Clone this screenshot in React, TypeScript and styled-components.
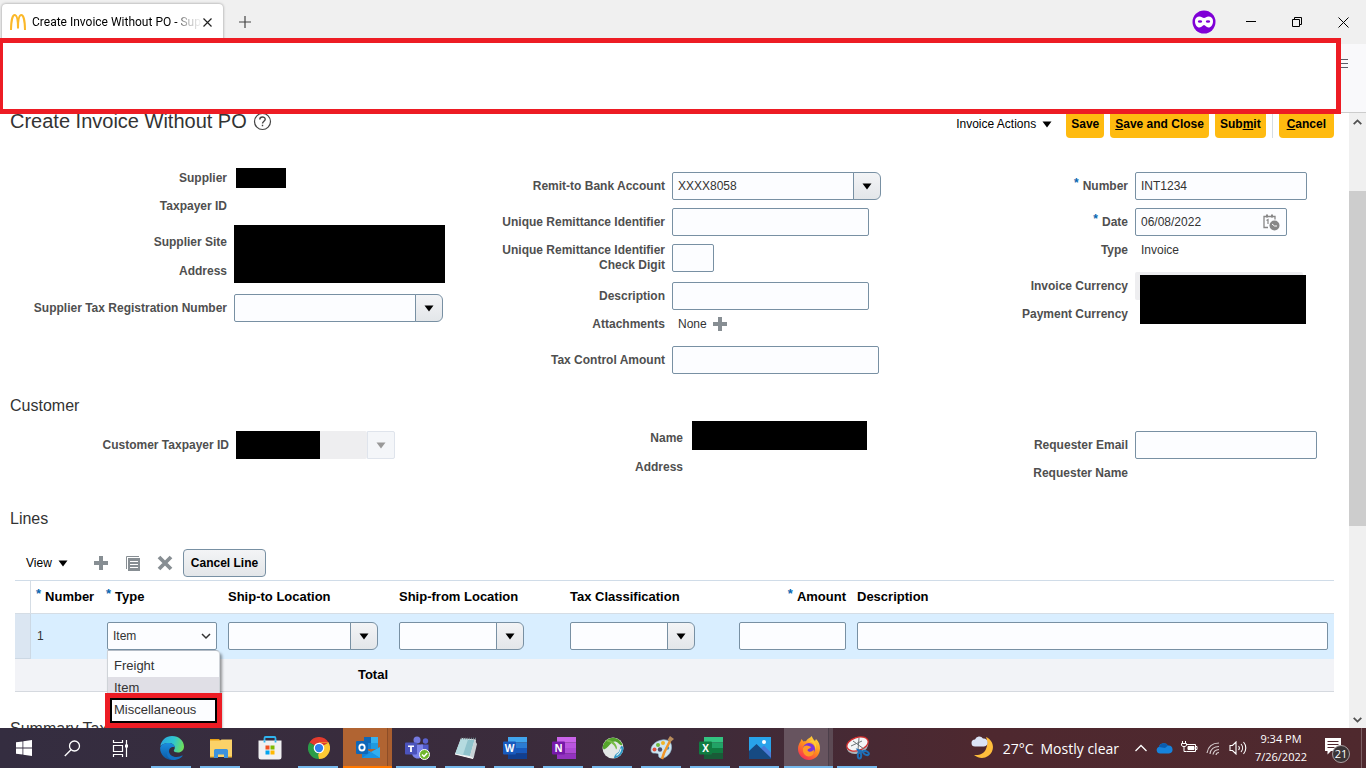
import React from 'react';
import styled, { createGlobalStyle, css } from 'styled-components';

const GlobalStyle = createGlobalStyle`
  *, *::before, *::after { box-sizing: border-box; }
  html, body, #root { height: 100%; }
  body {
    margin: 0;
    overflow: hidden;
    background: #fff;
    color: #333;
    font: 12px/15px "Liberation Sans", Arial, sans-serif;
  }
  button, input, select { font: inherit; color: inherit; margin: 0; }
  h1, h2, ul { margin: 0; padding: 0; font-weight: 400; }
  svg { display: block; flex: none; }
`;

const ui = '"Open Sans", "Segoe UI", sans-serif';
const red = '#ed1c24';
const edge = '#7890a3';

const Screen = styled.div`
  display: flex;
  flex-direction: column;
  height: 100vh;
  position: relative;
  overflow: hidden;
`;

/* ---------- browser chrome ---------- */

const TabStrip = styled.header`
  display: flex;
  align-items: stretch;
  flex: none;
  height: 44px;
  background: #f0f0f0;
`;

const BrowserTab = styled.div`
  display: flex;
  align-items: center;
  width: 221px;
  margin: 4px 0 0 2px;
  padding: 0 10px 4px 8px;
  border-radius: 4px 4px 0 0;
  background: #fff;
  box-shadow: 0 0 3px rgba(0, 0, 0, 0.4);
`;

const TabTitle = styled.span`
  flex: 1;
  margin-left: 6px;
  overflow: hidden;
  white-space: nowrap;
  font: 12px/16px Roboto, "Segoe UI", sans-serif;
  color: #000;
  mask-image: linear-gradient(to right, #000 145px, rgba(0, 0, 0, 0.4) 152px, transparent 171px);
`;

const ChromeButton = styled.button<{ $w: number }>`
  display: flex;
  align-items: center;
  justify-content: center;
  width: ${(p) => p.$w}px;
  padding: 0;
  border: 0;
  background: transparent;
`;

const WindowControls = styled.div`
  display: flex;
  margin-left: auto;
`;

const BrowserToolbar = styled.div`
  display: flex;
  align-items: flex-start;
  justify-content: flex-end;
  flex: none;
  height: 69px;
  padding: 13px 18px 0 0;
  background: #f9f9fb;
  border-bottom: 1px solid #ccc;
`;

const AddressHighlight = styled.div`
  position: absolute;
  top: 38px;
  left: 0;
  right: 25px;
  height: 76px;
  border: 5px solid ${red};
  border-left-width: 3px;
  background: #fff;
  z-index: 5;
`;

/* ---------- page ---------- */

const Viewport = styled.div`
  display: flex;
  flex: 1;
  min-height: 0;
  overflow: hidden;
`;

const Page = styled.main`
  flex: 1;
  min-width: 0;
`;

const PageHeader = styled.div`
  display: flex;
  align-items: flex-start;
  height: 28px;
  margin-top: -3px;
  padding: 0 15px 0 10px;
`;

const PageTitle = styled.h1`
  font-size: 20px;
  line-height: 22px;
`;

const HelpButton = styled.button`
  margin: 2px 0 0 6px;
  padding: 0;
  border: 0;
  background: none;
`;

const Actions = styled.div`
  display: flex;
  align-items: stretch;
  gap: 6px;
  height: 28px;
  margin-left: auto;
`;

const MenuButton = styled.button`
  display: flex;
  align-items: center;
  gap: 6px;
  padding: 0;
  border: 0;
  background: none;
  color: #000;
  white-space: nowrap;
`;

const ActionsMenu = styled(MenuButton)`
  margin-right: 8px;
`;

const YellowButton = styled.button`
  padding: 0 5px;
  border: 0;
  border-radius: 4px;
  background: #ffbb10;
  color: #000;
  font-weight: 700;
  white-space: nowrap;
`;

const CancelButton = styled(YellowButton)`
  padding: 0 8px;
`;

const Separator = styled.span`
  width: 1px;
  background: #d6dde3;
`;

const FormGrid = styled.div`
  display: grid;
  grid-template-columns: 445fr 455fr 449fr;
`;

const InvoiceForm = styled(FormGrid)`
  margin-top: 26px;
`;

const Column = styled.div<{ $label: number; $top?: number }>`
  --label: ${(p) => p.$label}px;
  display: flex;
  flex-direction: column;
  padding-top: ${(p) => p.$top ?? 0}px;
`;

const Row = styled.div<{ $gap?: number }>`
  position: relative;
  display: flex;
  align-items: center;
  height: 28px;
  margin-top: ${(p) => p.$gap ?? 0}px;
`;

const GroupRow = styled.div<{ $gap?: number }>`
  display: flex;
  align-items: flex-start;
  margin-top: ${(p) => p.$gap ?? 0}px;
`;

const labelText = css`
  flex: none;
  width: var(--label);
  text-align: right;
  font-weight: 700;
  color: #4f4f4f;
`;

const Label = styled.label`
  ${labelText}
`;

const LabelOnly = styled.span`
  ${labelText}
`;

const LabelStack = styled.div`
  ${labelText}
  display: flex;
  flex-direction: column;
  padding-top: 3px;
  line-height: 29px;
`;

const Star = styled.span`
  position: relative;
  top: -3px;
  margin-right: 4px;
  color: #0a66b0;
`;

const fieldBox = css`
  height: 28px;
  border: 1px solid ${edge};
  border-radius: 2px;
  background: #fcfdff;
  color: #333;
  outline: 0;
`;

const TextInput = styled.input<{ $w: number }>`
  ${fieldBox}
  width: ${(p) => p.$w}px;
  margin-left: 7px;
  padding: 0 5px;
`;

const DisabledInput = styled.input<{ $w: number }>`
  width: ${(p) => p.$w}px;
  height: 28px;
  margin-left: 7px;
  padding: 0 5px;
  border: 0;
  border-radius: 2px;
  background: #eeeef0;
`;

const DateBox = styled.div`
  ${fieldBox}
  display: flex;
  align-items: center;
  width: 152px;
  margin-left: 7px;
  padding-right: 6px;
`;

const DateInput = styled.input`
  flex: 1;
  min-width: 0;
  padding: 0 5px;
  border: 0;
  outline: 0;
  background: none;
`;

const IconButton = styled.button`
  padding: 0;
  border: 0;
  background: none;
`;

const AttachButton = styled(IconButton)`
  margin-left: 5px;
`;

const ComboBox = styled.div<{ $w: number; $inset?: number }>`
  display: flex;
  width: ${(p) => p.$w}px;
  height: 28px;
  margin-left: ${(p) => p.$inset ?? 7}px;
`;

const ComboInput = styled.input`
  ${fieldBox}
  flex: 1;
  min-width: 0;
  padding: 0 5px;
  border-radius: 2px 0 0 2px;
`;

const ComboButton = styled.button`
  display: flex;
  align-items: center;
  justify-content: center;
  width: 28px;
  height: 28px;
  margin-left: -1px;
  padding: 0;
  border: 1px solid ${edge};
  border-radius: 0 6px 6px 0;
  background: linear-gradient(#f3f4f6, #e3e6e9);
  color: #000;

  &:disabled {
    margin-left: 0;
    border-color: #dfe4ec;
    border-radius: 0 2px 2px 0;
    background: #f4f6f9;
    color: #999;
  }
`;

const PlainValue = styled.span`
  margin-left: 13px;
`;

const Redaction = styled.div<{ $w: number; $h: number; $inset?: number }>`
  width: ${(p) => p.$w}px;
  height: ${(p) => p.$h}px;
  margin-left: ${(p) => p.$inset ?? 7}px;
  background: #000;
`;

const RedactionOver = styled.div<{ $x: number; $y: number; $w: number; $h: number }>`
  position: absolute;
  left: calc(var(--label) + ${(p) => p.$x}px);
  top: ${(p) => p.$y}px;
  width: ${(p) => p.$w}px;
  height: ${(p) => p.$h}px;
  background: #000;
  z-index: 1;
`;

const SectionTitle = styled.h2<{ $gap?: number }>`
  margin: ${(p) => p.$gap ?? 22}px 0 0 10px;
  font-size: 16px;
  line-height: 20px;
`;

const CustomerForm = styled(FormGrid)`
  margin-top: 5px;
`;

const LinesToolbar = styled.div`
  display: flex;
  align-items: center;
  height: 28px;
  margin: 20px 0 0 26px;
`;

const ToolIcons = styled.div`
  display: flex;
  gap: 16px;
  margin: 0 10px 0 25px;
`;

const GreyButton = styled.button`
  height: 28px;
  padding: 0 7px;
  border: 1px solid ${edge};
  border-radius: 4px;
  background: linear-gradient(#f3f4f6, #e3e6e9);
  color: #000;
  font-weight: 700;
`;

/* ---------- lines table ---------- */

const TableWrap = styled.div`
  margin: 3px 15px 0;
`;

const LinesTable = styled.table`
  width: 100%;
  table-layout: fixed;
  border-collapse: separate;
  border-spacing: 0;
  border-top: 1px solid #d0dce8;
  border-bottom: 1px solid #d5d9df;
`;

const Col = styled.col<{ $w?: number }>`
  width: ${(p) => (p.$w ? `${p.$w}px` : 'auto')};
`;

const HeadCell = styled.th<{ $right?: boolean; $starred?: boolean }>`
  height: 33px;
  padding: 0 5px 2px ${(p) => (p.$starred ? 5 : 6)}px;
  border-bottom: 1px solid #d5dde5;
  text-align: ${(p) => (p.$right ? 'right' : 'left')};
  font-size: 13px;
  font-weight: 700;
  color: #000;
  white-space: nowrap;
`;

const HeadSelector = styled(HeadCell)`
  border-right: 1px solid #d5dde5;
`;

const BodyCell = styled.td<{ $right?: boolean }>`
  height: 45px;
  padding: 0 ${(p) => (p.$right ? 5 : 6)}px 1px 6px;
  background: #d9eeff;
  text-align: ${(p) => (p.$right ? 'right' : 'left')};
`;

const BodySelector = styled(BodyCell)`
  background: #dbe6f2;
  border-right: 1px solid #ccd8e4;
  border-bottom: 1px solid #ccd8e4;
`;

const TypeCell = styled.div`
  position: relative;
`;

const FootCell = styled.td`
  height: 32px;
  padding: 0 5px 1px 0;
  background: #f2f3f7;
  text-align: right;
  font-size: 13px;
  font-weight: 700;
  color: #000;
`;

const CellInput = styled(TextInput)`
  margin-left: 0;
`;

const WideInput = styled(CellInput)`
  width: 100%;
`;

const TypeSelect = styled.select`
  ${fieldBox}
  display: block;
  width: 110px;
  padding: 0 5px;
  appearance: none;
`;

const SelectChevron = styled.span`
  position: absolute;
  top: 10px;
  left: 94px;
  pointer-events: none;
`;

const Options = styled.ul`
  position: absolute;
  top: 28px;
  left: 0;
  width: 113px;
  height: 82px;
  padding-top: 4px;
  list-style: none;
  background: #fcfdff;
  border: 1px solid #cfd3d8;
  border-top-color: #b4bcc6;
  border-radius: 0 4px 0 0;
  box-shadow: 2px 3px 3px rgba(0, 0, 0, 0.4);
  z-index: 3;
`;

const Option = styled.li<{ $on?: boolean }>`
  height: 22px;
  padding: 0 6px;
  font-size: 13px;
  line-height: 21px;
  background: ${(p) => (p.$on ? '#e0dfe6' : 'transparent')};
`;

const OptionHighlight = styled.div`
  position: absolute;
  top: 71px;
  left: -2px;
  width: 117px;
  height: 35px;
  border: 5px solid ${red};
  z-index: 4;

  &::after {
    content: '';
    display: block;
    height: 100%;
    border: 2px solid #000;
  }
`;

/* ---------- scrollbar ---------- */

const Scrollbar = styled.div`
  display: grid;
  grid-template-rows: 17px 61fr 335fr 185fr 17px;
  flex: none;
  width: 17px;
  background: #f0f0f0;
`;

const ScrollArrow = styled.span`
  display: flex;
  align-items: center;
  justify-content: center;
`;

const ScrollThumb = styled.span`
  grid-row: 3;
  background: #cdcdcd;
`;

const ScrollEnd = styled(ScrollArrow)`
  grid-row: 5;
`;

/* ---------- taskbar ---------- */

const Taskbar = styled.footer`
  display: flex;
  flex: none;
  position: relative;
  z-index: 6;
  height: 40px;
  background: linear-gradient(90deg, #342d40, #3d2b3a 50%, #4e282f 72%, #4f292e);
  color: #fff;
  font-family: ${ui};
`;

const SystemButtons = styled.div`
  display: flex;
  margin-right: 3px;
`;

const TaskButton = styled.button<{ $w?: number; $bg?: string; $line?: string; $full?: boolean }>`
  position: relative;
  display: flex;
  align-items: center;
  justify-content: center;
  width: ${(p) => p.$w ?? 49}px;
  padding: 0;
  border: 0;
  background: ${(p) => p.$bg ?? 'transparent'};

  &::after {
    content: '';
    position: absolute;
    bottom: 0;
    left: ${(p) => (p.$full ? 0 : 4)}px;
    right: ${(p) => (p.$full ? 0 : 5)}px;
    height: 2px;
    background: ${(p) => p.$line ?? 'transparent'};
  }
`;

const Tray = styled.div`
  display: flex;
  align-items: center;
  margin-left: auto;
`;

const Weather = styled.div`
  display: flex;
  align-items: center;
  margin-right: 15px;
  font-size: 14px;
  white-space: nowrap;
`;

const Temperature = styled.span`
  margin: 0 7px 0 8px;
`;

const TrayIcons = styled.div`
  display: flex;
  align-items: center;
  gap: 8px;
`;

const Clock = styled.div`
  width: 68px;
  text-align: center;
  font-size: 11px;
  line-height: 18px;
`;

const Notifications = styled.button`
  position: relative;
  width: 28px;
  height: 32px;
  margin-left: 10px;
  padding: 0 0 3px;
  border: 0;
  background: none;
`;

const Badge = styled.span`
  position: absolute;
  left: 7px;
  top: 13px;
  width: 18px;
  height: 18px;
  border: 1px solid #a9a0a2;
  border-radius: 9px;
  background: #3a3436;
  color: #fff;
  font-size: 11px;
  line-height: 16px;
  text-align: center;
`;

const DesktopEdge = styled.span`
  width: 1px;
  height: 40px;
  margin: 0 4px 0 8px;
  background: #7b5f63;
`;

/* ---------- small drawings ---------- */

const Caret = () => (
  <svg width="10" height="7" viewBox="0 0 10 7"><path d="M0.5 0.5h9L5 6.5z" fill="currentColor" /></svg>
);

const Plus = () => (
  <svg width="16" height="16" viewBox="0 0 16 16"><path d="M6 1h4v5h5v4h-5v5H6v-5H1V6h5z" fill="#878e93" /></svg>
);

const Mask = () => (
  <svg width="24" height="24" viewBox="0 0 24 24">
    <circle cx="12" cy="12" r="11.5" fill="#7f00d6" />
    <path d="M3 11c0-3 2-4.500 4.500-4.500C9.500 6.500 10.500 8 12 8s2.500-1.500 4.500-1.500C19 6.500 21 8 21 11c0 4-2 6.500-4.500 6.500-2.500 0-3-2.500-4.500-2.500s-2 2.500-4.500 2.500C5 17.500 3 15 3 11z" fill="#fff" />
    <ellipse cx="8" cy="11.500" rx="2.200" ry="1.300" fill="#7f00d6" />
    <ellipse cx="16" cy="11.500" rx="2.200" ry="1.300" fill="#7f00d6" />
  </svg>
);

const Arches = () => (
  <svg width="16" height="16" viewBox="0 0 16 16" fill="none" stroke="#fbb829" strokeWidth="2">
    <path d="M1 16C1 8 2.500 1 4.700 1S8 7 8 14.500C8 7 9.100 1 11.300 1S15 8 15 16" />
  </svg>
);

const EdgeIcon = () => (
  <svg width="24" height="24" viewBox="0 0 24 24">
    <defs>
      <linearGradient id="eg" x1="0" y1="0.300" x2="1" y2="0.500">
        <stop offset="0" stopColor="#2aa7e0" /><stop offset="0.550" stopColor="#30c6cf" /><stop offset="1" stopColor="#6ee05a" />
      </linearGradient>
      <linearGradient id="eb" x1="0" y1="0" x2="0" y2="1">
        <stop offset="0" stopColor="#1a8ee0" /><stop offset="1" stopColor="#0c59a4" />
      </linearGradient>
    </defs>
    <path d="M0.300 10C1.500 4 6 0 12 0c7 0 12 5 12 10.500 0 3.500-2.500 6-6 6-3 0-4.200-1-4.200-2 0-.7 1-1.200 1-3 0-2.500-2.700-4.500-6-4.500-4 0-7 1.500-8.500 3z" fill="url(#eg)" />
    <path d="M0.200 11.500C1 8.500 4.500 7 8.500 7c3.500 0 6.300 2 6.300 4.500-1.300-1-5.800-.5-5.800 4 0 4.500 4 8 8.500 7C15.500 23.500 13.800 24 12 24 5 24-.5 18 .2 11.500z" fill="url(#eb)" />
    <path d="M9 14.500c-.5 4 3.500 6.500 7.500 6.500 2.500 0 4.500-.8 5.500-1.500.6-.3.900 0 .5.600-1.500 2.200-4.700 3.900-8 3.900-5 0-8-3.500-7.500-7 .2-1.200 1-2 2-2.500z" fill="#1272c4" />
  </svg>
);

const FolderIcon = () => (
  <svg width="22" height="20" viewBox="0 0 22 20">
    <path d="M0 1h9l2 2.500H0z" fill="#e8a317" />
    <path d="M0 2.500h10l1.500-1H22V19H0z" fill="#fbd268" />
    <path d="M4 20v-7.500A1.500 1.500 0 0 1 5.500 11h11a1.500 1.500 0 0 1 1.500 1.500V20h-4v-3.500H8V20z" fill="#3d92dc" />
    <path d="M0 18h4v1.500H0zM18 18h4v1.500h-4z" fill="#f0b93c" />
  </svg>
);

const StoreIcon = () => (
  <svg width="24" height="24" viewBox="0 0 24 24">
    <path d="M6.500 5V2.200A1.200 1.200 0 0 1 7.700 1h8.600a1.200 1.200 0 0 1 1.200 1.200V5" fill="none" stroke="#30b4ef" strokeWidth="1.800" />
    <path d="M.5 4.500h23V21a2.500 2.500 0 0 1-2.500 2.500H3A2.500 2.500 0 0 1 .5 21z" fill="#f0f0f2" />
    <path d="M7.500 9.500h4v4h-4z" fill="#f25022" /><path d="M12.500 9.500h4v4h-4z" fill="#7fba00" />
    <path d="M7.500 14.500h4v4h-4z" fill="#00a4ef" /><path d="M12.500 14.500h4v4h-4z" fill="#ffb900" />
    <path d="M6.500 6.500V4.500M17.500 6.500V4.500" stroke="#30b4ef" strokeWidth="1.800" />
  </svg>
);

const ChromeIcon = () => (
  <svg width="22" height="22" viewBox="0 0 24 24">
    <path d="M12 12 1.600 6A12 12 0 0 1 22.400 6z" fill="#e33b2e" />
    <path d="M12 12V24A12 12 0 0 1 1.600 6z" fill="#2a9c48" />
    <path d="M12 12 22.400 6A12 12 0 0 1 12 24z" fill="#fcc934" />
    <path d="M12 6.500h10.600L22.400 6H12z" fill="#fcc934" />
    <path d="M16.800 14.700 12 24l-1-5z" fill="#fcc934" />
    <circle cx="12" cy="12" r="5.800" fill="#fff" /><circle cx="12" cy="12" r="4.500" fill="#2d7ff0" />
  </svg>
);

const Tile = styled.text`
  font: 700 10px ${ui};
  fill: #fff;
  text-anchor: middle;
`;

const OutlookIcon = () => (
  <svg width="24" height="24" viewBox="0 0 24 24">
    <path d="M8 1h14v12H8z" fill="#1a80cf" /><path d="M15 1h7v6h-7z" fill="#36b2ee" /><path d="M8 1h7v6H8z" fill="#1067b5" />
    <path d="M15 7h7v6h-7z" fill="#1f9be0" />
    <path d="M6 11l9 5 9-5v11H6z" fill="#1482d6" /><path d="M24 11v11L11 14.500l4 1.500z" fill="#33aef0" /><path d="M6 22l9-6 9 6z" fill="#1a94e3" />
    <rect x="0" y="5" width="12" height="13" rx="1" fill="#0f67b8" />
    <ellipse cx="6" cy="11.500" rx="2.700" ry="3" fill="none" stroke="#fff" strokeWidth="1.800" />
  </svg>
);

const TeamsIcon = () => (
  <svg width="26" height="24" viewBox="0 0 26 24">
    <circle cx="13" cy="4" r="3.500" fill="#7479e0" /><circle cx="21.500" cy="5" r="2.700" fill="#5a62cf" />
    <path d="M17 8.500h7.500V15c0 3-2 4.500-4 4.500S17 18 17 15z" fill="#5059c9" />
    <path d="M8 8.500h11V17c0 4-2.500 5.500-5.500 5.500S8 20 8 17z" fill="#7b83eb" />
    <rect x="1" y="6.500" width="12" height="12" rx="1" fill="#4b53bc" />
    <path d="M4 9.500h6v1.600H7.900V16H6.100v-4.900H4z" fill="#fff" />
    <circle cx="20.500" cy="18.500" r="5" fill="#6fb52c" stroke="#fff" />
    <path d="M18 18.500l2 2 3.200-3.600" fill="none" stroke="#fff" strokeWidth="1.500" />
  </svg>
);

const NotepadIcon = () => (
  <svg width="24" height="24" viewBox="0 0 24 24">
    <path d="M7 2l15 1.500-3 19L1 18z" fill="#e8eef0" />
    <path d="M7 3l13.500 1L16 20 1.500 17.500z" fill="#8fc3cc" />
    <path d="M7 3l7 .5L9 18.700l-7.500-1.200z" fill="#b5dbe0" />
    <path d="M16 20l4.500-16L23 8l-3.500 14.500z" fill="#c9d2d6" />
    <path d="M7 2.500h15" stroke="#6b8288" strokeWidth="1.500" strokeDasharray="1 1" />
    <path d="M1 18l18 4.500" stroke="#fff" />
  </svg>
);

const OfficeIcon = ({ letter, dark, shades }: { letter: string; dark: string; shades: string[] }) => (
  <svg width="24" height="22" viewBox="0 0 24 22">
    {shades.map((c, i) => <rect key={i} x="5" y={i * 5.5} width="19" height="5.500" fill={c} />)}
    <rect x="0" y="4.500" width="13" height="13" rx="1" fill={dark} />
    <Tile x="6.500" y="14.500">{letter}</Tile>
  </svg>
);

const WebexIcon = () => (
  <svg width="22" height="22" viewBox="0 0 22 22">
    <circle cx="11" cy="11" r="10.500" fill="#e3e7e6" />
    <path d="M1 8.500C3 3 8 0 13 1c4 .8 6.500 4 7.500 7-1.500 1-3-.5-4.500-2-2-2-4-2-6-.5C7 8 5.500 11 2 12.500.8 11.500.6 10 1 8.500z" fill="#55a32c" />
    <path d="M5 2.500C9 3 13 5 14.500 9c.8 2 .5 3-.5 3.500-1-4-4-7-9-8z" fill="#77bd46" />
    <path d="M21.500 11c0 5-4.500 10-9.500 10.300 0-2 1-4 3.500-5.300 2.500-1.500 2-4.500 3.500-6.500 1-1 2 0 2.500 1.500z" fill="#2f96c4" />
    <path d="M14.500 18.500c2.500-1.500 4-4 4.500-7" stroke="#dff1f6" strokeWidth="1.300" fill="none" />
  </svg>
);

const PaintIcon = () => (
  <svg width="24" height="24" viewBox="0 0 24 24">
    <path d="M12 4c7-1 10 3 9.500 8-.5 6-6 11-11 10-3-.6-1-4-3-4.500C5 17 1 18 1 14 1 9 6 5 12 4z" fill="#cfe5f1" stroke="#8db4ca" strokeWidth="0.700" />
    <circle cx="4.500" cy="13.500" r="2" fill="#e0513c" /><circle cx="8" cy="9" r="2" fill="#6dbb3c" /><circle cx="13" cy="7" r="2" fill="#f0b428" />
    <circle cx="10" cy="13.500" r="2.200" fill="#4b4a68" /><circle cx="17.500" cy="12" r="1.800" fill="#3f8fd4" />
    <path d="M20 5 14 17l-2 6" stroke="#f0962a" strokeWidth="2.500" fill="none" /><path d="M17.500 4 20 0l4 3-3.500 3z" fill="#b98d5c" />
  </svg>
);

const PhotosIcon = () => (
  <svg width="22" height="22" viewBox="0 0 22 22">
    <path d="M0 0h22v22H0z" fill="#28a3ea" /><circle cx="15" cy="5" r="2" fill="#fff" />
    <path d="M10 13l5-4.500 7 7V22H14z" fill="#4b7bd8" /><path d="M0 14l7.500-7L22 21v1H0z" fill="#164a82" />
  </svg>
);

const FirefoxIcon = () => (
  <svg width="24" height="24" viewBox="0 0 24 24">
    <defs>
      <linearGradient id="fx" x1="0.800" y1="0" x2="0.200" y2="1">
        <stop offset="0" stopColor="#ffe03f" /><stop offset="0.500" stopColor="#ff8a1e" /><stop offset="1" stopColor="#f5245c" />
      </linearGradient>
    </defs>
    <path d="M3.500 5.500 4.500 3l2 2.500C8 5 9 5.500 10 4c1-2 3-1.500 4.500-4 1.500 2 1.500 3.500 3.500 5l1-2c3 3 4 6 4 9.500C23 19 18 24 12 24S1 19 1 13c0-3 1-5.500 2.500-7.500z" fill="url(#fx)" />
    <circle cx="12" cy="13" r="6" fill="#7b35d8" />
    <path d="M6 12c1-3 4-3 6-2l2 1c-1 2-3.500 1.500-3.500 3.500 1.500 2 5 1.500 6-1 2 5-3 8-7 6.500C6.500 18.500 5.500 15 6 12z" fill="#ff9a26" />
    <path d="M12 6c4-1 7 3 6 8 2-4 1-8-3-10z" fill="#ffcf35" />
  </svg>
);

const SnipIcon = () => (
  <svg width="24" height="24" viewBox="0 0 24 24">
    <ellipse cx="11.500" cy="10" rx="11" ry="7.500" fill="#aeb6ba" transform="rotate(-18 11.500 10)" />
    <ellipse cx="11.500" cy="8" rx="11" ry="6.500" fill="#f4f5f6" stroke="#d32f2f" strokeWidth="1.300" transform="rotate(-18 11.500 8)" />
    <path d="M7 5l11 8M13 2l-1 12M5 10l11-5" stroke="#6d7478" />
    <g fill="none" stroke="#1e6fb8" strokeWidth="2"><ellipse cx="13.500" cy="19.500" rx="1.700" ry="3" /><ellipse cx="20" cy="17" rx="3" ry="1.700" transform="rotate(25 20 17)" /><path d="M13.500 16.500 12 14l6 2" /></g>
  </svg>
);

const MoonIcon = () => (
  <svg width="24" height="24" viewBox="0 0 24 24">
    <path d="M15 1c6 2.500 8.500 9 6 14.500C18.500 21 10.500 25 3 19c6 .5 10-1.500 12-6 1.700-4 1.700-8 0-12z" fill="#ffbe3c" />
    <path d="M4 10.500a3.500 3.500 0 0 1 0-7 4.500 4.500 0 0 1 8-1 4 4 0 0 1 1 8z" fill="#dbe4f7" />
  </svg>
);

/* ---------- composed pieces ---------- */

const Combo = ({ id, w, value = '', inset, label }: { id: string; w: number; value?: string; inset?: number; label: string }) => (
  <ComboBox $w={w} $inset={inset}>
    <ComboInput id={id} defaultValue={value} aria-label={label} />
    <ComboButton type="button" aria-label={`Open ${label}`}><Caret /></ComboButton>
  </ComboBox>
);

const Field = ({ id, label, w, gap, value = '', required }: { id: string; label: React.ReactNode; w: number; gap?: number; value?: string; required?: boolean }) => (
  <Row $gap={gap}>
    <Label htmlFor={id}>{required && <Star>*</Star>}{label}</Label>
    <TextInput id={id} $w={w} defaultValue={value} />
  </Row>
);

const blue = '#76b9ed';

export default function App() {
  return (
    <Screen>
      <GlobalStyle />
      <TabStrip>
        <BrowserTab>
          <Arches />
          <TabTitle>Create Invoice Without PO - Supplier</TabTitle>
          <ChromeButton $w={12} aria-label="Close tab">
            <svg width="9" height="9" viewBox="0 0 9 9"><path d="M.5.5l8 8M8.500.5l-8 8" stroke="#222" strokeWidth="1.200" /></svg>
          </ChromeButton>
        </BrowserTab>
        <ChromeButton $w={43} aria-label="New tab">
          <svg width="12" height="12" viewBox="0 0 12 12"><path d="M6 0v12M0 6h12" stroke="#444" strokeWidth="1.200" /></svg>
        </ChromeButton>
        <WindowControls>
          <ChromeButton $w={48} aria-label="Private browsing"><Mask /></ChromeButton>
          <ChromeButton $w={46} aria-label="Minimize">
            <svg width="10" height="10" viewBox="0 0 10 10"><path d="M0 4.500h10" stroke="#000" /></svg>
          </ChromeButton>
          <ChromeButton $w={46} aria-label="Restore">
            <svg width="10" height="10" viewBox="0 0 10 10" fill="none" stroke="#000"><path d="M.5 2.500h7v7h-7zM2.500 2.500v-2h7v7h-2" /></svg>
          </ChromeButton>
          <ChromeButton $w={46} aria-label="Close">
            <svg width="11" height="11" viewBox="0 0 11 11"><path d="M.5.5l10 10M10.500.5l-10 10" stroke="#000" /></svg>
          </ChromeButton>
        </WindowControls>
      </TabStrip>
      <BrowserToolbar>
        <IconButton aria-label="Browser menu">
          <svg width="12" height="13" viewBox="0 0 12 13"><path d="M0 2.500h12M0 6.500h12M0 10.500h12" stroke="#5b5b66" /></svg>
        </IconButton>
      </BrowserToolbar>
      <AddressHighlight />

      <Viewport>
        <Page>
          <PageHeader>
            <PageTitle>Create Invoice Without PO</PageTitle>
            <HelpButton aria-label="Help">
              <svg width="19" height="19" viewBox="0 0 19 19" fill="none" stroke="#444" strokeWidth="1.200">
                <circle cx="9.500" cy="9.500" r="8" /><path d="M6.800 7.500c0-3.400 5.400-3.300 5.400-.2 0 1.900-2.700 2-2.700 4.200M9.500 12.700v1.500" strokeWidth="1.400" />
              </svg>
            </HelpButton>
            <Actions>
              <ActionsMenu type="button">Invoice Actions <Caret /></ActionsMenu>
              <YellowButton type="button">Save</YellowButton>
              <YellowButton type="button"><u>S</u>ave and Close</YellowButton>
              <YellowButton type="button">Sub<u>m</u>it</YellowButton>
              <Separator />
              <CancelButton type="button"><u>C</u>ancel</CancelButton>
            </Actions>
          </PageHeader>

          <InvoiceForm>
            <Column $label={227}>
              <Row><LabelOnly>Supplier</LabelOnly><Redaction $w={50} $h={20} $inset={9} /></Row>
              <Row><LabelOnly>Taxpayer ID</LabelOnly></Row>
              <GroupRow $gap={5}>
                <LabelStack><span>Supplier Site</span><span>Address</span></LabelStack>
                <Redaction $w={211} $h={58} />
              </GroupRow>
              <Row $gap={8}>
                <Label htmlFor="trn">Supplier Tax Registration Number</Label>
                <Combo id="trn" w={209} label="Supplier Tax Registration Number" />
              </Row>
            </Column>

            <Column $label={220} $top={8}>
              <Row>
                <Label htmlFor="bank">Remit-to Bank Account</Label>
                <Combo id="bank" w={209} value="XXXX8058" label="Remit-to Bank Account" />
              </Row>
              <Field id="uri" label="Unique Remittance Identifier" w={197} gap={8} />
              <Field id="uricd" label={<>Unique Remittance Identifier<br />Check Digit</>} w={42} gap={8} />
              <Field id="desc" label="Description" w={197} gap={10} />
              <Row>
                <LabelOnly>Attachments</LabelOnly>
                <PlainValue>None</PlainValue>
                <AttachButton type="button" aria-label="Add attachment"><Plus /></AttachButton>
              </Row>
              <Field id="tax" label="Tax Control Amount" w={207} gap={8} />
            </Column>

            <Column $label={228} $top={8}>
              <Field id="num" label="Number" w={172} value="INT1234" required />
              <Row $gap={8}>
                <Label htmlFor="date"><Star>*</Star>Date</Label>
                <DateBox>
                  <DateInput id="date" defaultValue="06/08/2022" />
                  <IconButton type="button" aria-label="Select date">
                    <svg width="17" height="17" viewBox="0 0 17 17">
                      <path d="M4 .5v3M9 .5v3" stroke="#878787" strokeWidth="2" />
                      <path d="M5 13.500H1V2.500h11v3" fill="none" stroke="#878787" strokeWidth="1.300" />
                      <path d="M3.500 6.500 5 5.500V10" fill="none" stroke="#878787" strokeWidth="1.200" />
                      <circle cx="11.500" cy="11.500" r="5" fill="#878787" /><path d="M9 10l2.500 2H14" fill="none" stroke="#fff" />
                    </svg>
                  </IconButton>
                </DateBox>
              </Row>
              <Row><LabelOnly>Type</LabelOnly><PlainValue>Invoice</PlainValue></Row>
              <Row $gap={8}>
                <Label htmlFor="cur">Invoice Currency</Label>
                <DisabledInput id="cur" $w={168} disabled />
                <RedactionOver $x={12} $y={3} $w={166} $h={49} />
              </Row>
              <Row><LabelOnly>Payment Currency</LabelOnly></Row>
            </Column>
          </InvoiceForm>

          <SectionTitle>Customer</SectionTitle>
          <CustomerForm>
            <Column $label={229} $top={10}>
              <Row>
                <Label htmlFor="ctid">Customer Taxpayer ID</Label>
                <DisabledInput id="ctid" $w={131} disabled />
                <ComboButton type="button" disabled aria-label="Open Customer Taxpayer ID"><Caret /></ComboButton>
                <RedactionOver $x={7} $y={0} $w={84} $h={28} />
              </Row>
            </Column>
            <Column $label={238}>
              <GroupRow>
                <LabelStack><span>Name</span><span>Address</span></LabelStack>
                <Redaction $w={175} $h={29} $inset={9} />
              </GroupRow>
            </Column>
            <Column $label={228} $top={10}>
              <Field id="email" label="Requester Email" w={182} />
              <Row><LabelOnly>Requester Name</LabelOnly></Row>
            </Column>
          </CustomerForm>

          <SectionTitle>Lines</SectionTitle>
          <LinesToolbar>
            <MenuButton type="button">View <Caret /></MenuButton>
            <ToolIcons>
              <IconButton type="button" aria-label="Add row"><Plus /></IconButton>
              <IconButton type="button" aria-label="Duplicate">
                <svg width="16" height="16" viewBox="0 0 16 16">
                  <path d="M1.500 14V1.500H14" fill="none" stroke="#878e93" /><path d="M3 3h12v13H3z" fill="#878e93" />
                  <path d="M5 6.500h8M5 9.500h8M5 12.500h8" stroke="#fff" />
                </svg>
              </IconButton>
              <IconButton type="button" aria-label="Delete">
                <svg width="16" height="16" viewBox="0 0 16 16"><path d="M2 2l12 12M14 2L2 14" stroke="#878e93" strokeWidth="3.800" /></svg>
              </IconButton>
            </ToolIcons>
            <GreyButton type="button">Cancel Line</GreyButton>
          </LinesToolbar>

          <TableWrap>
            <LinesTable>
              <colgroup>
                <Col $w={16} /><Col $w={70} /><Col $w={121} /><Col $w={171} /><Col $w={171} /><Col $w={137} /><Col $w={150} /><Col />
              </colgroup>
              <thead>
                <tr>
                  <HeadSelector aria-label="Select" />
                  <HeadCell $starred><Star>*</Star>Number</HeadCell>
                  <HeadCell $starred><Star>*</Star>Type</HeadCell>
                  <HeadCell>Ship-to Location</HeadCell>
                  <HeadCell>Ship-from Location</HeadCell>
                  <HeadCell>Tax Classification</HeadCell>
                  <HeadCell $right><Star>*</Star>Amount</HeadCell>
                  <HeadCell>Description</HeadCell>
                </tr>
              </thead>
              <tbody>
                <tr>
                  <BodySelector />
                  <BodyCell>1</BodyCell>
                  <BodyCell>
                    <TypeCell>
                      <TypeSelect aria-label="Type" defaultValue="Item">
                        <option>Freight</option><option>Item</option><option>Miscellaneous</option>
                      </TypeSelect>
                      <SelectChevron>
                        <svg width="10" height="8" viewBox="0 0 10 8"><path d="M1 2l4 4 4-4" fill="none" stroke="#333" strokeWidth="1.500" /></svg>
                      </SelectChevron>
                      <Options role="listbox" aria-label="Type options">
                        <Option role="option">Freight</Option>
                        <Option role="option" $on>Item</Option>
                        <Option role="option">Miscellaneous</Option>
                      </Options>
                      <OptionHighlight />
                    </TypeCell>
                  </BodyCell>
                  <BodyCell><Combo id="shipto" w={150} inset={0} label="Ship-to Location" /></BodyCell>
                  <BodyCell><Combo id="shipfrom" w={125} inset={0} label="Ship-from Location" /></BodyCell>
                  <BodyCell><Combo id="taxclass" w={125} inset={0} label="Tax Classification" /></BodyCell>
                  <BodyCell $right><CellInput $w={107} aria-label="Amount" /></BodyCell>
                  <BodyCell><WideInput $w={100} aria-label="Description" /></BodyCell>
                </tr>
              </tbody>
              <tfoot>
                <tr><FootCell colSpan={4}>Total</FootCell><FootCell colSpan={4} /></tr>
              </tfoot>
            </LinesTable>
          </TableWrap>
          <SectionTitle $gap={27}>Summary Tax</SectionTitle>
        </Page>

        <Scrollbar aria-hidden="true">
          <ScrollArrow><svg width="9" height="6" viewBox="0 0 9 6"><path d="M.7 5.200l3.800-3.800 3.800 3.800" fill="none" stroke="#505050" strokeWidth="1.800" /></svg></ScrollArrow>
          <ScrollThumb />
          <ScrollEnd><svg width="9" height="6" viewBox="0 0 9 6"><path d="M.7.8l3.800 3.800L8.300.8" fill="none" stroke="#505050" strokeWidth="1.800" /></svg></ScrollEnd>
        </Scrollbar>
      </Viewport>

      <Taskbar>
        <SystemButtons>
          <TaskButton $w={48} aria-label="Start">
            <svg width="16" height="16" viewBox="0 0 16 16" fill="#fff"><path d="M0 2.300 6.500 1.400v6.100H0zM7.300 1.300 16 0v7.500H7.300zM0 8.400h6.500v6.200L0 13.700zM7.300 8.400H16V16l-8.700-1.300z" /></svg>
          </TaskButton>
          <TaskButton $w={48} aria-label="Search">
            <svg width="17" height="17" viewBox="0 0 17 17" fill="none" stroke="#fff" strokeWidth="1.300"><circle cx="10.500" cy="6" r="5" /><path d="M7 9.800.8 16" /></svg>
          </TaskButton>
          <TaskButton $w={48} aria-label="Task view">
            <svg width="17" height="17" viewBox="0 0 17 17" fill="none" stroke="#fff" strokeWidth="1.200"><path d="M1.500 0v2.500h9V0M1.500 5.500h9v6h-9zM1.500 17v-2.500h9V17M14.500 0v17" /><path d="M13 4.500h3v3h-3z" fill="#fff" stroke="none" /></svg>
          </TaskButton>
        </SystemButtons>
        <TaskButton $line={blue} aria-label="Edge"><EdgeIcon /></TaskButton>
        <TaskButton $line={blue} aria-label="File Explorer"><FolderIcon /></TaskButton>
        <TaskButton aria-label="Store"><StoreIcon /></TaskButton>
        <TaskButton $line={blue} aria-label="Chrome"><ChromeIcon /></TaskButton>
        <TaskButton $line="#ff7800" $full $bg="linear-gradient(90deg, #b16432 44px, #8d4d27 44px, #8d4d27 45px, #a95e2f 45px)" aria-label="Outlook"><OutlookIcon /></TaskButton>
        <TaskButton $line={blue} aria-label="Teams"><TeamsIcon /></TaskButton>
        <TaskButton $line={blue} aria-label="Notepad"><NotepadIcon /></TaskButton>
        <TaskButton $line={blue} aria-label="Word"><OfficeIcon letter="W" dark="#185abd" shades={['#41a5ee', '#2b7cd3', '#185abd', '#103f91']} /></TaskButton>
        <TaskButton $line={blue} aria-label="OneNote"><OfficeIcon letter="N" dark="#7719aa" shades={['#ca64ea', '#bb56e0', '#ae4bd5', '#9332bf']} /></TaskButton>
        <TaskButton $line={blue} aria-label="Webex"><WebexIcon /></TaskButton>
        <TaskButton $line={blue} aria-label="Paint"><PaintIcon /></TaskButton>
        <TaskButton $line={blue} aria-label="Excel"><OfficeIcon letter="X" dark="#107c41" shades={['#33c481', '#21a366', '#107c41', '#185c37']} /></TaskButton>
        <TaskButton $line={blue} aria-label="Photos"><PhotosIcon /></TaskButton>
        <TaskButton $line={blue} $full $bg="linear-gradient(90deg, #67545f 44px, #4c3f4a 44px, #4c3f4a 45px, #5c4a54 45px)" aria-label="Firefox"><FirefoxIcon /></TaskButton>
        <TaskButton $line={blue} aria-label="Snipping Tool"><SnipIcon /></TaskButton>

        <Tray>
          <Weather><MoonIcon /><Temperature>27°C</Temperature>Mostly clear</Weather>
          <TrayIcons>
            <svg width="14" height="8" viewBox="0 0 14 8"><path d="M1.500 7 7 1.500 12.500 7" fill="none" stroke="#fff" strokeWidth="1.300" /></svg>
            <svg width="17" height="11" viewBox="0 0 17 11"><path d="M4 10.500a3.500 3.500 0 0 1-1-6.800A5 5 0 0 1 12 2.500a4 4 0 0 1 1 8z" fill="#1683dc" /><path d="M3 4a5 5 0 0 1 9-1.500L9 5z" fill="#0a5cae" /></svg>
            <svg width="17" height="14" viewBox="0 0 17 14" fill="none" stroke="#fff"><path d="M5.500 3.500h9v7h-9M14.500 5.500h1.500v3h-1.500" /><path d="M7 5.500h6v3H7z" fill="#fff" /><path d="M1.500 0v2M4.500 0v2M.5 2.500h5v2l-1.500 1H2l-1.500-1zM3 6v4.500h2.500" /></svg>
            <svg width="15" height="15" viewBox="0 0 15 15" fill="none" stroke="#d6cbcd" strokeWidth="1.200"><path d="M1 12C2 6 6 2 13 2M4 13c.5-4.500 4-7.500 9-7.500M7 13.500c.5-3 2.500-4.800 6-5M10 14c.3-1.500 1.300-2.400 3-2.500" /></svg>
            <svg width="18" height="14" viewBox="0 0 18 14" fill="none" stroke="#fff" strokeWidth="1.100"><path d="M1 4.500h2.500L7 1v12L3.500 9.500H1zM9.500 5a3 3 0 0 1 0 4M12 3a6 6 0 0 1 0 8M14.500 1a9 9 0 0 1 0 12" /></svg>
          </TrayIcons>
          <Clock>9:34 PM<br />7/26/2022</Clock>
          <Notifications aria-label="Notifications">
            <svg width="16" height="17" viewBox="0 0 16 17"><path d="M0 0h16v13H6l-3.500 3.500V13H0z" fill="#fff" /><path d="M2.500 3.500h11M2.500 6.500h11M2.500 9.500h7" stroke="#4f282f" /></svg>
            <Badge>21</Badge>
          </Notifications>
          <DesktopEdge />
        </Tray>
      </Taskbar>
    </Screen>
  );
}
